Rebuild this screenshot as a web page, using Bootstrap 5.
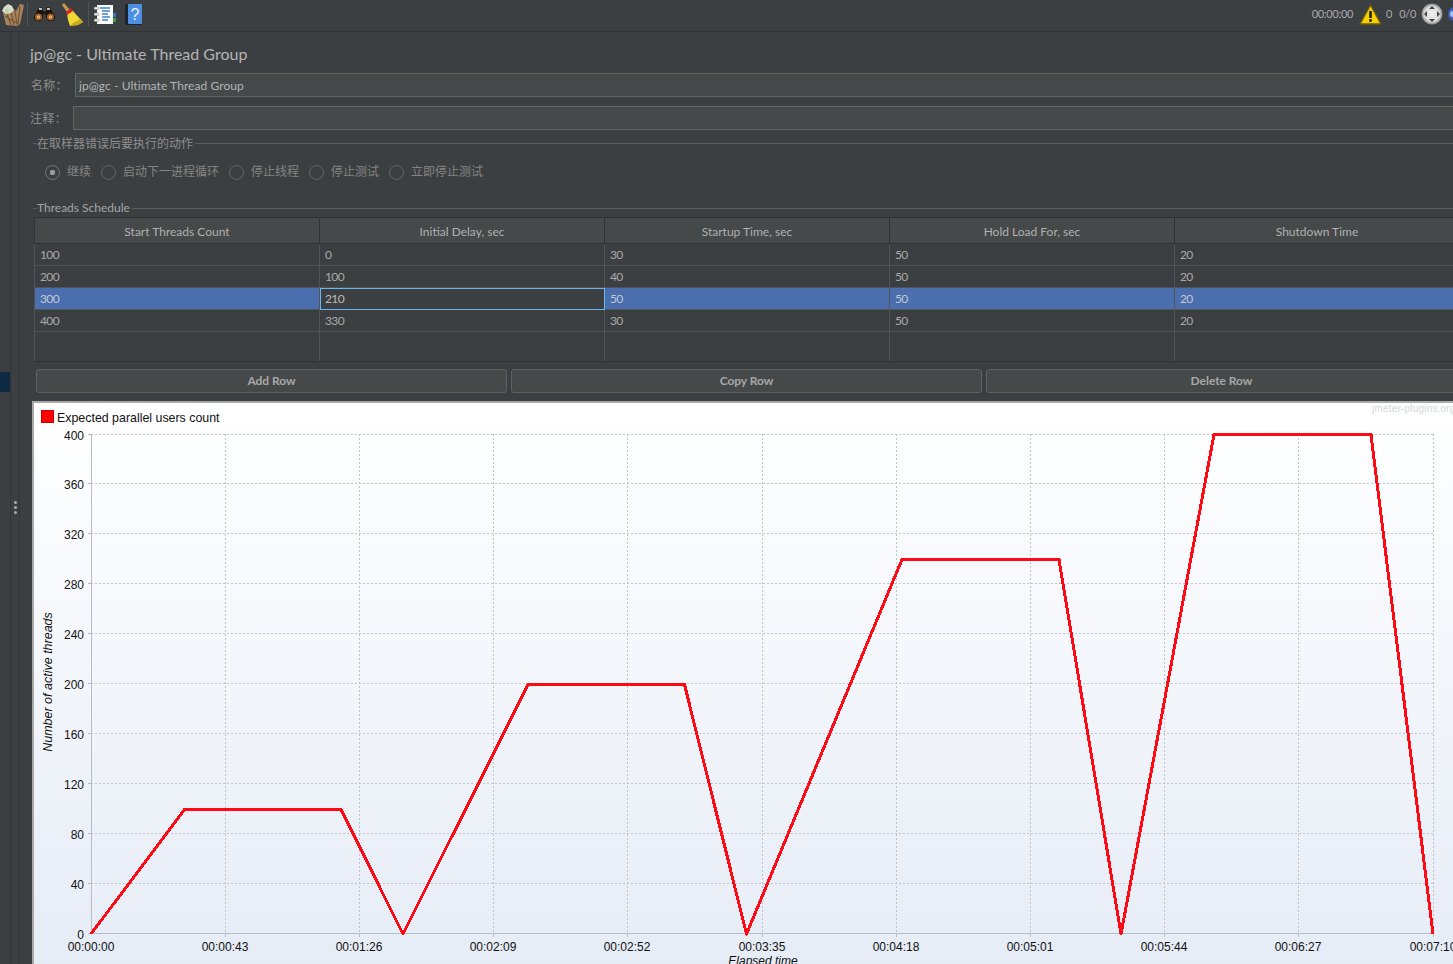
<!DOCTYPE html>
<html lang="zh-CN">
<head>
<meta charset="utf-8">
<title>jp@gc - Ultimate Thread Group</title>
<link href="https://cdn.jsdelivr.net/npm/bootstrap@5.3.0/dist/css/bootstrap.min.css" rel="stylesheet">
<style>
html,body{height:100%;overflow:hidden}
body{background:#3c3f41;color:#bbb;font-family:Lato,"Noto Sans CJK SC",sans-serif;font-size:12px;font-feature-settings:"liga" 1}
.shell{height:964px;width:1453px;overflow:hidden}
.topbar{height:32px;flex:none;border-bottom:1px solid #303335;padding-left:2px;padding-bottom:3px}
.tsep{width:1px;height:24px;background:#515456}
.tstat{font-size:11px;color:#a9a9a9;letter-spacing:-.3px}
.rail-a{width:11px;flex:none;border-right:1px solid #323537}
.rail-b{width:9px;flex:none;border-right:1px solid #323537}
.navy-mark{height:20px;background:#0d2a42;margin-top:340px}
.grip{margin-top:469px;gap:2px}
.grip i{display:block;width:3px;height:3px;background:#aaa;border-radius:50%}
.workspace{width:1433px;flex:none;overflow:hidden}
.pane-title{font-size:16px;line-height:22px;margin:11px 0 0 10px;color:#b4b4b4;font-weight:400}
.fld{height:24px}
.fld label{font-size:12px;color:#8e8e8e;letter-spacing:.3px;white-space:nowrap;padding-top:2px}
.fld .form-control{height:24px;min-height:0;background:#45494a;border:1px solid #646464;border-right:0;border-radius:0;color:#b4b4b4;font-size:12px;letter-spacing:.07px;padding:0 3px;box-shadow:none}
.fld-a{margin:8px 0 0 11px}.fld-a label{width:44px;flex:none}
.fld-b{margin:9px 0 0 10px}.fld-b label{width:43px;flex:none}
.grp-head{margin-left:13px;height:14px;font-size:12px;color:#a4a4a4;white-space:nowrap}
.grp-head::before{content:"";width:4px;height:1px;background:#5a5d5f;flex:none}
.grp-head::after{content:"";flex:1;height:1px;background:#5a5d5f;margin-left:2px}
.grp-a{margin-top:6px;color:#8e8e8e}
.grp-a span{padding-top:2px}
.grp-b{margin-top:21px}
.opts{margin:14px 0 0 25px;height:16px;color:#858585}
.opt{margin:0;padding:0;min-height:0;gap:7px;margin-right:10px}
.opt .form-check-input{float:none;margin:0;width:15px;height:15px;background-color:transparent;border:1px solid #666;background-image:none;opacity:1}
.opt .form-check-input:checked{background-image:radial-gradient(circle,#9a9a9a 0 2.5px,transparent 3px);border-color:#777;background-color:transparent}
.opt .form-check-input[disabled]~.form-check-label{opacity:1;color:#858585}
.sched{margin:2px 0 0 14px;width:1426px;max-width:none;table-layout:fixed;border-collapse:collapse;--bs-table-bg:transparent;--bs-table-color:#a9a9a9;--bs-table-border-color:#515456}
.sched th{height:26px;padding:2px 0 0;background:#45494a;text-align:center;font-weight:400;color:#b0b0b0;font-size:12px;vertical-align:middle;border:1px solid #303335}
.sched td{height:22px;padding:0 0 0 5px;font-size:12px;letter-spacing:-.6px;vertical-align:middle;border:1px solid #515456;line-height:21px}
.sched tr.picked td{background:#4b6eaf;color:#c4c8d0}
.sched tr.picked td.editing{background:#3c3f41;outline:1px solid #6cb6ee;outline-offset:-1px;color:#bbb}
.sched tr.blank td{height:30px;border-bottom-color:#303335}
.acts{margin:7px 0 0 16px;width:1421px;gap:4px}
.acts .btn{flex:1 0 0;height:24px;padding:0;background:#45494a;border:1px solid #5e6163;border-radius:3px;color:#a8a8a8;font-size:12px;font-weight:700;letter-spacing:-.05px;line-height:22px;--bs-btn-hover-bg:#45494a}
.chartbox{margin:8px 0 0 12px;width:1421px;height:563px;border-left:2px solid #a9a9a9;border-top:2px solid #a9a9a9;overflow:hidden}
.chartbox svg{display:block}
.chartbox text{font-family:"Liberation Sans",Arial,sans-serif;font-size:12px;fill:#111}
</style>
</head>
<body>
<div class="shell d-flex flex-column">
  <div class="topbar d-flex align-items-center">
    <svg width="22" height="23" viewBox="0 0 22 23"><path d="M1 9 4 22 15 23 18 21 22 2 18 1 14 8 11 6 8 10Z" fill="#a8845c"/><path d="M5 11 9 22M9 9 12 22M13 8 15 22M18 3 16 21M3 13 14 20" stroke="#6e5236" stroke-width="1.1" fill="none"/><path d="M2 4 6 1 10 3 12 7 9 10 4 11 0 8Z" fill="#d9dcd2"/><circle cx="5" cy="8" r="2" fill="#b9d49a"/></svg>
    <span class="tsep" style="margin-left:3px"></span>
    <svg width="23" height="16" viewBox="0 0 23 16" style="margin-left:5px"><path d="M6 1H10V5H13V1H17L20 6 23 11 21 15 16 16 13 13 12 8H11L10 13 7 16 2 15 0 11 3 6Z" fill="#17140f" stroke="#55504a" stroke-width=".6"/><circle cx="5.5" cy="11" r="3.6" fill="#9a5f28"/><circle cx="5.5" cy="11" r="1.8" fill="#e2ab70"/><circle cx="17.5" cy="11" r="3.6" fill="#9a5f28"/><circle cx="17.5" cy="11" r="1.8" fill="#e2ab70"/><rect x="6" y="2" width="3" height="2" fill="#bbb"/><rect x="14" y="2" width="3" height="2" fill="#bbb"/></svg>
    <svg width="22" height="23" viewBox="0 0 22 23" style="margin-left:5px"><path d="M1 2 3 0 9 7 6 9Z" fill="#c89a50"/><path d="M6 10 11 7 22 19 17 22 9 23 7 17Z" fill="#efd736"/><path d="M9 23 17 22 22 19 20 16 12 20Z" fill="#c7a81e"/><path d="M5 9 10 5 12 8 6 12Z" fill="#d5232a"/></svg>
    <span class="tsep" style="margin-left:5px"></span>
    <svg width="23" height="21" viewBox="0 0 23 21" style="margin-left:5px"><rect x="3" y="1" width="16" height="19" fill="#fff"/><path d="M6 4H16M8 7H16M8 10H14M8 13H16M8 16H14" stroke="#3f7fd0" stroke-width="1.3"/><g fill="#eee" stroke="#888" stroke-width=".6"><rect x="0" y="3" width="5" height="2.5" rx="1"/><rect x="0" y="9" width="5" height="2.5" rx="1"/><rect x="0" y="15" width="5" height="2.5" rx="1"/></g><rect x="19" y="9" width="3" height="4" fill="#3d6fc4"/><rect x="19" y="14" width="3" height="4" fill="#3f9a3a"/></svg>
    <svg width="17" height="21" viewBox="0 0 17 21" style="margin-left:8px"><rect x="0" y="0" width="17" height="21" rx="1.5" fill="#1b2530"/><rect x="3" y="0" width="14" height="20" rx="1" fill="#4d8fe0"/><text x="10" y="16" text-anchor="middle" fill="#e8f2ff" font-size="16" font-family="Liberation Sans">?</text></svg>
    <div class="ms-auto d-flex align-items-center tstat">
      <span>00:00:00</span>
      <svg width="23" height="21" viewBox="0 0 23 21" style="margin-left:6px"><path d="M11.5 1 22 20H1Z" fill="#f7cf00" stroke="#6a5a10" stroke-width="1.4" stroke-linejoin="round"/><rect x="10.2" y="7" width="2.6" height="7" fill="#222"/><rect x="10.2" y="15.2" width="2.6" height="2.6" fill="#222"/></svg>
      <span style="margin-left:4px">0</span>
      <span style="margin-left:7px">0/0</span>
      <svg width="22" height="22" viewBox="0 0 22 22" style="margin-left:5px"><defs><radialGradient id="gb"><stop offset="0" stop-color="#eee"/><stop offset=".7" stop-color="#ddd"/><stop offset="1" stop-color="#888"/></radialGradient></defs><circle cx="11" cy="11" r="10.5" fill="url(#gb)"/><path d="M11 3 14 6H8ZM11 19 14 16H8ZM3 11 6 8V14ZM19 11 16 8V14Z" fill="#444"/></svg>
      <svg width="6" height="20" viewBox="0 0 6 20" style="margin-left:4px"><circle cx="8" cy="10" r="7" fill="#3c5fc0"/><circle cx="6" cy="10" r="3" fill="#a9c0ee"/></svg>
    </div>
  </div>
  <div class="d-flex flex-grow-1 overflow-hidden">
    <div class="rail-a"><div class="navy-mark"></div></div>
    <div class="rail-b d-flex flex-column align-items-center"><div class="grip d-flex flex-column"><i></i><i></i><i></i></div></div>
    <div class="workspace">
      <h1 class="pane-title">jp@gc - Ultimate Thread Group</h1>
      <div class="fld fld-a d-flex align-items-center"><label for="nm">名称：</label><input id="nm" class="form-control" value="jp@gc - Ultimate Thread Group"></div>
      <div class="fld fld-b d-flex align-items-center"><label for="cm">注释：</label><input id="cm" class="form-control"></div>
      <div class="grp-head grp-a d-flex align-items-center"><span>在取样器错误后要执行的动作</span></div>
      <div class="opts d-flex align-items-center">
        <div class="form-check opt d-flex align-items-center"><input class="form-check-input" type="radio" name="act" id="r1" checked disabled><label class="form-check-label" for="r1">继续</label></div>
        <div class="form-check opt d-flex align-items-center"><input class="form-check-input" type="radio" name="act" id="r2" disabled><label class="form-check-label" for="r2">启动下一进程循环</label></div>
        <div class="form-check opt d-flex align-items-center"><input class="form-check-input" type="radio" name="act" id="r3" disabled><label class="form-check-label" for="r3">停止线程</label></div>
        <div class="form-check opt d-flex align-items-center"><input class="form-check-input" type="radio" name="act" id="r4" disabled><label class="form-check-label" for="r4">停止测试</label></div>
        <div class="form-check opt d-flex align-items-center"><input class="form-check-input" type="radio" name="act" id="r5" disabled><label class="form-check-label" for="r5">立即停止测试</label></div>
      </div>
      <div class="grp-head grp-b d-flex align-items-center">Threads Schedule</div>
      <table class="table sched mb-0">
        <thead><tr><th>Start Threads Count</th><th>Initial Delay, sec</th><th>Startup Time, sec</th><th>Hold Load For, sec</th><th>Shutdown Time</th></tr></thead>
        <tbody>
          <tr><td>100</td><td>0</td><td>30</td><td>50</td><td>20</td></tr>
          <tr><td>200</td><td>100</td><td>40</td><td>50</td><td>20</td></tr>
          <tr class="picked"><td>300</td><td class="editing">210</td><td>50</td><td>50</td><td>20</td></tr>
          <tr><td>400</td><td>330</td><td>30</td><td>50</td><td>20</td></tr>
          <tr class="blank"><td></td><td></td><td></td><td></td><td></td></tr>
        </tbody>
      </table>
      <div class="acts d-flex">
        <button type="button" class="btn">Add Row</button>
        <button type="button" class="btn">Copy Row</button>
        <button type="button" class="btn">Delete Row</button>
      </div>
      <div class="chartbox">
        <svg width="1419" height="561" viewBox="34 403 1419 561" role="img" aria-label="Expected parallel users count">
          <defs><linearGradient id="bgc" x1="0" y1="0" x2="0" y2="1"><stop offset="0" stop-color="#fff"/><stop offset="1" stop-color="#e6ecf6"/></linearGradient></defs>
          <rect x="34" y="403" width="1419" height="561" fill="url(#bgc)"/>
          <text x="1372" y="412" style="font-size:10px;fill:#d3d6dc;letter-spacing:.2px">jmeter-plugins.org</text>
          <rect x="41.5" y="410.5" width="12" height="12" fill="#f00" stroke="#c00"/>
          <text x="57" y="422" style="font-size:12.4px">Expected parallel users count</text>
          <g stroke="#c0c3cb" stroke-dasharray="2 2" fill="none" shape-rendering="crispEdges">
            <path d="M91 434.5H1433M91 483.5H1433M91 533.5H1433M91 583.5H1433M91 633.5H1433M91 683.5H1433M91 733.5H1433M91 783.5H1433M91 833.5H1433M91 883.5H1433"/>
            <path d="M225.5 434V934M359.5 434V934M493.5 434V934M627.5 434V934M762.5 434V934M896.5 434V934M1030.5 434V934M1164.5 434V934M1298.5 434V934M1433.5 434V934"/>
          </g>
          <path d="M91.5 434V933.5H1433M88 434.5H91M88 483.5H91M88 533.5H91M88 583.5H91M88 633.5H91M88 683.5H91M88 733.5H91M88 783.5H91M88 833.5H91M88 883.5H91M88 933.5H91M225.5 934V937M359.5 934V937M493.5 934V937M627.5 934V937M762.5 934V937M896.5 934V937M1030.5 934V937M1164.5 934V937M1298.5 934V937M1433.5 934V937" stroke="#b9bcc6" fill="none" shape-rendering="crispEdges"/>
          <polyline points="91,934 184.5,809.5 341,809.5 403,934 528,684.5 684.5,684.5 746.5,934 902,559.5 1059,559.5 1121,934 1214,434.5 1371,434.5 1433,934" fill="none" stroke="#ff0a14" stroke-width="3" stroke-linejoin="round" shape-rendering="crispEdges"/>
          <g text-anchor="end">
            <text x="84" y="440">400</text><text x="84" y="489">360</text><text x="84" y="539">320</text><text x="84" y="589">280</text><text x="84" y="639">240</text><text x="84" y="689">200</text><text x="84" y="739">160</text><text x="84" y="789">120</text><text x="84" y="839">80</text><text x="84" y="889">40</text><text x="84" y="939">0</text>
          </g>
          <g text-anchor="middle">
            <text x="91" y="951">00:00:00</text><text x="225" y="951">00:00:43</text><text x="359" y="951">00:01:26</text><text x="493" y="951">00:02:09</text><text x="627" y="951">00:02:52</text><text x="762" y="951">00:03:35</text><text x="896" y="951">00:04:18</text><text x="1030" y="951">00:05:01</text><text x="1164" y="951">00:05:44</text><text x="1298" y="951">00:06:27</text><text x="1433" y="951">00:07:10</text>
            <text x="763" y="965" style="font-style:italic">Elapsed time</text>
            <text transform="translate(52 682) rotate(-90)" style="font-style:italic;font-size:12.5px">Number of active threads</text>
          </g>
        </svg>
      </div>
    </div>
  </div>
</div>
</body>
</html>
